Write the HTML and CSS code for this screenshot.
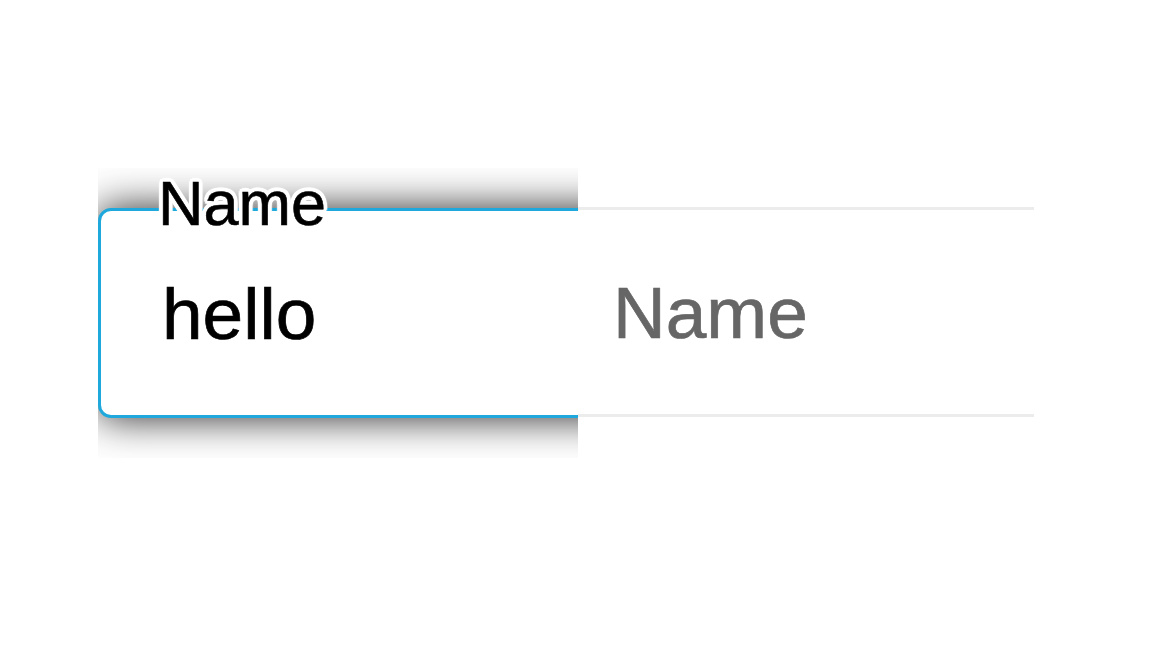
FILE: index.html
```html
<!DOCTYPE html>
<html lang="en">
<head>
<meta charset="utf-8">
<title>Floating label input</title>
<link rel="stylesheet" href="styles.css">
</head>
<body>
<main class="stage">
  <div class="compare">
    <div class="pane pane-focused">
      <div class="field field-focused">
        <span class="float-label">Name</span>
        <span class="value">hello</span>
      </div>
    </div>
    <div class="pane pane-idle">
      <div class="field field-idle">
        <span class="placeholder">Name</span>
      </div>
    </div>
  </div>
</main>
</body>
</html>
```
FILE: styles.css
```css
html, body {
  margin: 0;
  padding: 0;
  background: #ffffff;
}

body {
  font-family: "Liberation Sans", Arial, Helvetica, sans-serif;
  color: #000;
}

.stage {
  width: 1160px;
  height: 650px;
  padding: 168px 0 0 98px;
  box-sizing: border-box;
}

.compare {
  display: flex;
  align-items: flex-start;
}

.pane {
  box-sizing: border-box;
}

.pane-focused {
  width: 480px;
  padding: 40px 0;
  overflow: hidden;
}

.pane-idle {
  width: 456px;
  padding-top: 39px;
}

.field {
  box-sizing: border-box;
  height: 210px;
  display: flex;
  align-items: center;
  font-size: 73px;
  line-height: 1;
  -webkit-text-stroke: 0.7px currentColor;
}

.field-focused {
  position: relative;
  width: 640px;
  border: 3px solid #1ea8dc;
  border-radius: 13px;
  background: #fff;
  padding-left: 61px;
  box-shadow: 0 0 40px rgba(0, 0, 0, 0.85);
}

.value {
  color: #000;
}

.float-label {
  position: absolute;
  left: 57px;
  top: -39px;
  font-size: 63px;
  line-height: 1;
  color: #000;
  -webkit-text-stroke: 0.6px #000;
  text-shadow:
    3px 0 0 #fff, -3px 0 0 #fff, 0 3px 0 #fff, 0 -3px 0 #fff,
    3px 3px 0 #fff, -3px 3px 0 #fff, 3px -3px 0 #fff, -3px -3px 0 #fff,
    4px 1px 1px #fff, -4px 1px 1px #fff, 1px 4px 1px #fff, 1px -4px 1px #fff,
    -1px 4px 1px #fff, -1px -4px 1px #fff, 4px -1px 1px #fff, -4px -1px 1px #fff;
}

.field-idle {
  border-top: 3px solid #ececec;
  border-bottom: 3px solid #ececec;
  padding-left: 35px;
  background: #fff;
}

.placeholder {
  color: #666666;
}
```
